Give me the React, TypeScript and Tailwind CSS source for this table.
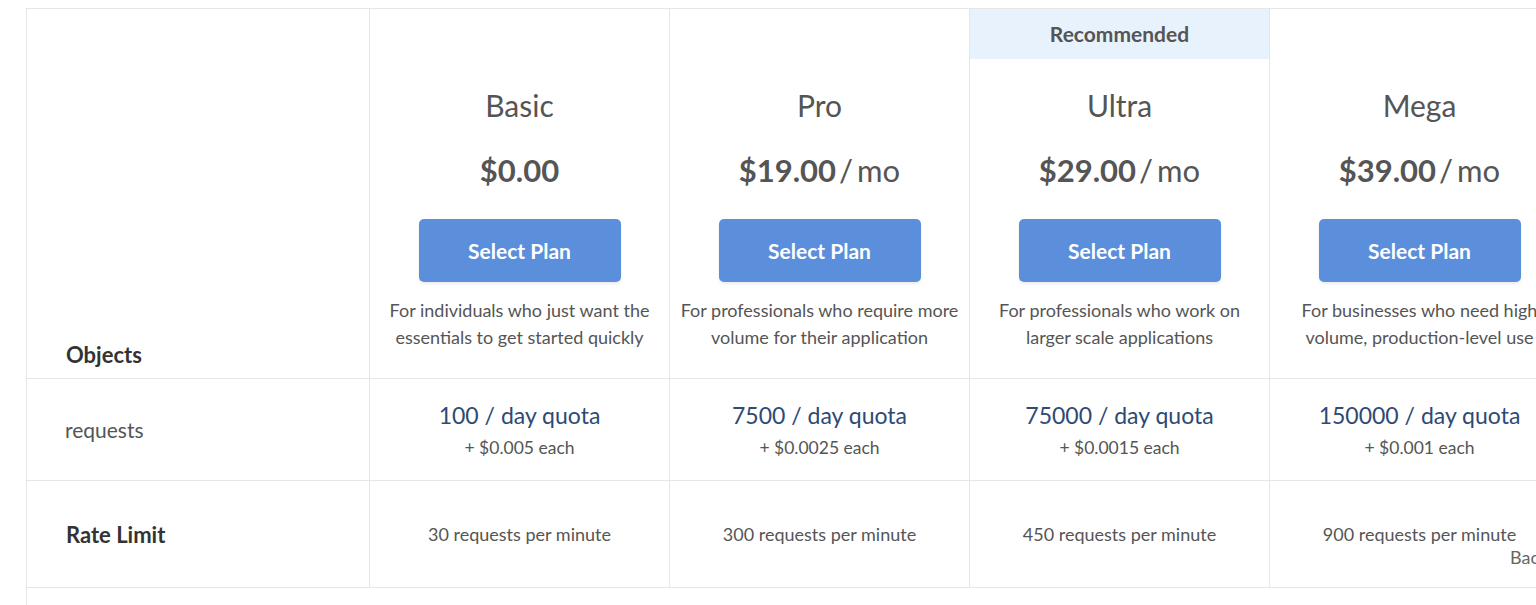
import React from 'react';

interface Plan {
  name: string;
  price: string;
  monthly: boolean;
  recommended: boolean;
  description: string[];
  quota: string;
  overage: string;
  rateLimit: string;
}

const plans: Plan[] = [
  {
    name: 'Basic',
    price: '$0.00',
    monthly: false,
    recommended: false,
    description: ['For individuals who just want the', 'essentials to get started quickly'],
    quota: '100 / day quota',
    overage: '+ $0.005 each',
    rateLimit: '30 requests per minute',
  },
  {
    name: 'Pro',
    price: '$19.00',
    monthly: true,
    recommended: false,
    description: ['For professionals who require more', 'volume for their application'],
    quota: '7500 / day quota',
    overage: '+ $0.0025 each',
    rateLimit: '300 requests per minute',
  },
  {
    name: 'Ultra',
    price: '$29.00',
    monthly: true,
    recommended: true,
    description: ['For professionals who work on', 'larger scale applications'],
    quota: '75000 / day quota',
    overage: '+ $0.0015 each',
    rateLimit: '450 requests per minute',
  },
  {
    name: 'Mega',
    price: '$39.00',
    monthly: true,
    recommended: false,
    description: ['For businesses who need high', 'volume, production-level use'],
    quota: '150000 / day quota',
    overage: '+ $0.001 each',
    rateLimit: '900 requests per minute',
  },
];

const cell = 'border-r border-b border-[#e6e6e6]';

export default function App() {
  return (
    <div
      className="relative w-[1536px] h-[605px] overflow-hidden bg-white text-[#555]"
      style={{ fontFamily: 'Lato, "Open Sans", sans-serif' }}
    >
      <div className="pl-[26px] pt-[8px]">
        <div className="grid w-max grid-cols-[343px_repeat(4,300px)] border-t border-l border-[#e6e6e6]">
          {/* Header row */}
          <div className={`${cell} flex items-end px-[39px] pb-[8px]`}>
            <span className="text-[22px] font-bold text-[#333] leading-[30px]">Objects</span>
          </div>
          {plans.map((plan) => (
            <div key={plan.name} className={`${cell} flex flex-col items-center pb-[27px]`}>
              {plan.recommended ? (
                <div className="w-full h-[50px] bg-[#e8f2fc] flex items-center justify-center text-[21px] font-bold text-[#555]">
                  Recommended
                </div>
              ) : (
                <div className="h-[50px]" />
              )}
              <h2 className="mt-[28px] text-[30px] leading-[36px]">{plan.name}</h2>
              <div className="mt-[27px] text-[31px] leading-[40px]">
                <span className="font-bold">{plan.price}</span>
                {plan.monthly && (
                  <>
                    <span className="ml-[3px]">/</span>
                    <span className="ml-[4px]">mo</span>
                  </>
                )}
              </div>
              <button className="mt-[29px] w-[202px] h-[63px] rounded-[5px] bg-[#5b8fdc] text-white text-[21px] font-bold shadow-[0_2px_3px_rgba(0,0,0,0.08)]">
                Select Plan
              </button>
              <p className="mt-[15px] text-center text-[18px] leading-[27px] whitespace-nowrap">
                {plan.description[0]}
                <br />
                {plan.description[1]}
              </p>
            </div>
          ))}

          {/* Requests row */}
          <div className={`${cell} h-[102px] flex items-center px-[38px]`}>
            <span className="text-[21px]">requests</span>
          </div>
          {plans.map((plan) => (
            <div key={plan.name} className={`${cell} h-[102px] flex flex-col items-center justify-center`}>
              <span className="text-[23px] leading-[30px] text-[#2e4a75]">{plan.quota}</span>
              <span className="mt-[6px] text-[17.5px] leading-[24px]">{plan.overage}</span>
            </div>
          ))}

          {/* Rate limit row */}
          <div className={`${cell} h-[107px] flex items-center px-[39px]`}>
            <span className="text-[22px] font-bold text-[#333]">Rate Limit</span>
          </div>
          {plans.map((plan) => (
            <div key={plan.name} className={`${cell} h-[107px] flex items-center justify-center`}>
              <span className="text-[18px]">{plan.rateLimit}</span>
            </div>
          ))}

          <div className="col-span-5 h-[40px]" />
        </div>
      </div>

      <a className="absolute left-[1510px] top-[544px] text-[18px] text-[#666] whitespace-nowrap">Back to top</a>
    </div>
  );
}
